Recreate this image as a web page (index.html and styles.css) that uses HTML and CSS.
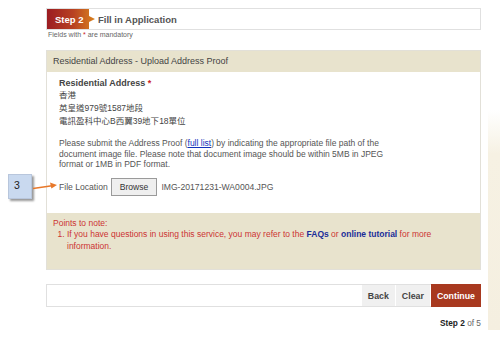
FILE: index.html
```html
<!DOCTYPE html>
<html>
<head>
<meta charset="utf-8">
<link rel="stylesheet" href="styles.css">
</head>
<body>
<div class="page">
  <div class="stepbar">
    <span class="step">Step 2</span>
    <span class="steptitle">Fill in Application</span>
  </div>
  <div class="mandatory">Fields with <span class="star">*</span> are mandatory</div>

  <div class="panel">
    <div class="panel-head">Residential Address - Upload Address Proof</div>
    <div class="panel-body">
      <div class="label">Residential Address <span class="star">*</span></div>
      <div class="addr">香港</div>
      <div class="addr">英皇道979號1587地段</div>
      <div class="addr">電訊盈科中心B西翼39地下18單位</div>
      <p class="desc">Please submit the Address Proof (<a class="link">full list</a>) by indicating the appropriate file path of the document image file. Please note that document image should be within 5MB in JPEG format or 1MB in PDF format.</p>
      <div class="fileline">
        <span>File Location</span>
        <span class="browse">Browse</span>
        <span>IMG-20171231-WA0004.JPG</span>
      </div>
    </div>
    <div class="notes">
      <div>Points to note:</div>
      <ol class="notelist">
        <li>If you have questions in using this service, you may refer to the <b class="blue">FAQs</b> or <b class="blue">online tutorial</b> for more information.</li>
      </ol>
    </div>
  </div>

  <div class="actions">
    <span class="btn">Back</span>
    <span class="btn">Clear</span>
    <span class="btn primary">Continue</span>
  </div>
  <div class="stepcount"><b>Step 2</b> of 5</div>

  <div class="badge">3</div>
  <svg class="arrow" width="26" height="10" viewBox="0 0 26 10">
    <path d="M1 6.5 L20 3.8" stroke="#e8782a" stroke-width="1.6" fill="none"/>
    <path d="M25 3 L18 0.6 L19.4 6.6 Z" fill="#e8782a"/>
  </svg>
  <div class="sidestrip"></div>
</div>
</body>
</html>
```
FILE: styles.css
```css
* { box-sizing: border-box; }
body {
  margin: 0;
  font-family: "Liberation Sans", Arial, sans-serif;
  color: #555;
  background: #fff;
}
.page {
  position: relative;
  width: 500px;
  height: 337px;
  padding: 8px 19px 0 46px;
}
.stepbar {
  display: flex;
  align-items: center;
  height: 22px;
  border: 1px solid #e0e0e0;
  width: 435px;
}
.step {
  height: 20px;
  width: 48px;
  padding-left: 8px;
  display: flex;
  align-items: center;
  color: #fff;
  font-weight: bold;
  font-size: 9.5px;
  background: linear-gradient(90deg, #9b1c22 0%, #b84222 55%, #d9821e 100%);
  clip-path: polygon(0 0, 42px 0, 42px 7px, 48px 10px, 42px 13px, 42px 20px, 0 20px);
}
.steptitle {
  margin-left: 3px;
  font-weight: bold;
  font-size: 9.5px;
  color: #555;
}
.mandatory {
  font-size: 7px;
  color: #666;
  margin: 1px 0 0 2px;
  height: 19px;
}
.star { color: #cc2222; }
.panel {
  width: 435px;
  border: 1px solid #e2e0d8;
}
.panel-head {
  background: #e8e3cd;
  height: 21px;
  padding: 5px 0 0 6px;
  font-size: 9px;
  color: #444;
}
.panel-body {
  background: #fff;
  padding: 6px 10px 0 12px;
  height: 141px;
  font-size: 8.5px;
  color: #555;
}
.label {
  font-weight: bold;
  font-size: 9px;
  color: #444;
  margin-bottom: 1px;
}
.addr {
  font-family: "Liberation Sans", "Noto Sans CJK TC", sans-serif;
  font-size: 8.5px;
  line-height: 13px;
  color: #444;
}
.desc {
  margin: 10px 0 0 0;
  width: 333px;
  line-height: 10.5px;
  color: #555;
}
.link {
  color: #1133bb;
  text-decoration: underline;
}
.fileline {
  display: flex;
  align-items: center;
  gap: 3px;
  margin-top: 8px;
  font-size: 8.6px;
}
.browse {
  border: 1px solid #9a9a9a;
  background: #efefef;
  padding: 3px 8px;
  color: #333;
  font-size: 8.6px;
  margin-right: 1px;
}
.notes {
  background: #e8e3cd;
  height: 56px;
  padding: 5px 0 0 6px;
  color: #cc3333;
  font-size: 8.5px;
}
.notelist {
  margin: 0;
  padding-left: 14px;
  line-height: 12px;
  width: 400px;
}
.blue { color: #1a2d99; }
.actions {
  margin-top: 14px;
  width: 435px;
  height: 23px;
  border: 1px solid #e0e0e0;
  display: flex;
  justify-content: flex-end;
  align-items: stretch;
}
.btn {
  display: flex;
  align-items: center;
  padding: 0 6px;
  font-size: 8.8px;
  font-weight: bold;
  color: #444;
  background: #f0f0f0;
  margin-left: 1px;
}
.btn.primary {
  background: #a8391f;
  color: #fff;
  padding: 0 6px;
  margin: -1px -1px -1px 1px;
}
.stepcount {
  width: 435px;
  text-align: right;
  font-size: 8.3px;
  margin-top: 11px;
  color: #666;
}
.stepcount b { color: #222; }
.badge {
  position: absolute;
  left: 8px;
  top: 174px;
  width: 24px;
  height: 25px;
  background: #c9d9ef;
  border: 1px solid #b8c6dc;
  box-shadow: 2px 2px 2px #999;
  font-size: 10.5px;
  color: #222;
  padding: 4px 0 0 5px;
}
.arrow {
  position: absolute;
  left: 32px;
  top: 182px;
}
.sidestrip {
  position: absolute;
  left: 488px;
  top: 110px;
  width: 12px;
  height: 220px;
  background: linear-gradient(180deg, rgba(245,240,225,0) 0%, #f6f1e3 20%, #f5efe0 100%);
}
```
